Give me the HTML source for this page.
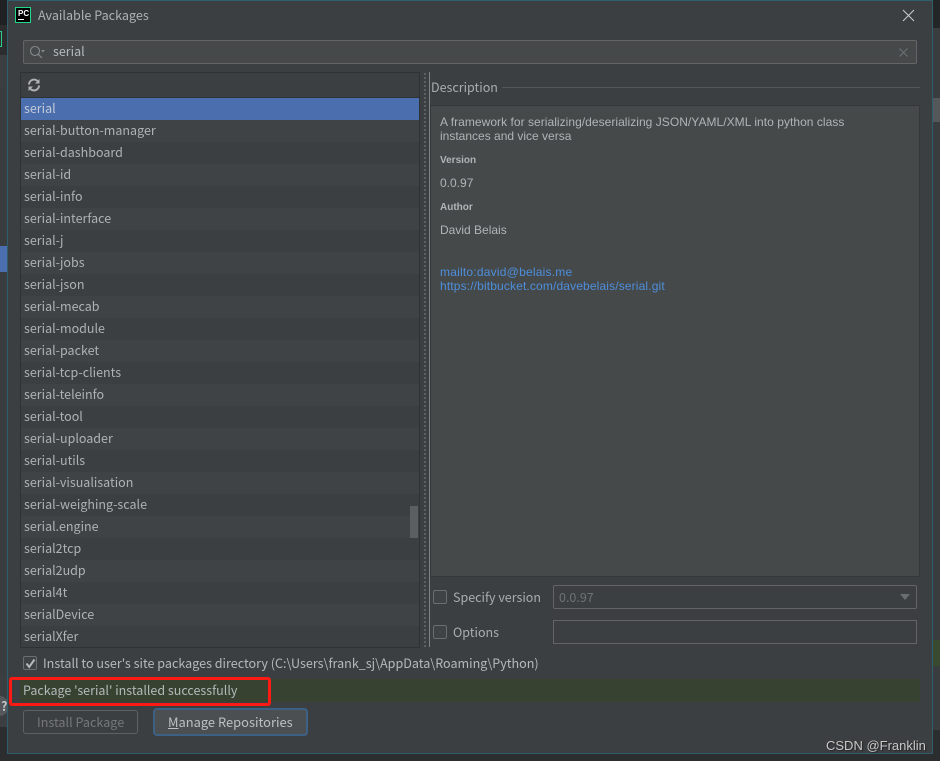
<!DOCTYPE html>
<html><head><meta charset="utf-8">
<style>
html,body{margin:0;padding:0;}
body{width:940px;height:761px;position:relative;overflow:hidden;background:#2b2d2f;font-family:"Noto Sans CJK SC","Liberation Sans",sans-serif;font-size:12.5px;color:#b5b9bb;}
div,span{position:absolute;box-sizing:border-box;}
.t{white-space:nowrap;line-height:18px;}
.row{left:0;width:398px;height:22px;line-height:20px;padding-left:3px;white-space:nowrap;color:#aeb2b4;}
.l{background:#404345;}
.a{font-family:"Liberation Sans",sans-serif;font-size:12px;white-space:nowrap;line-height:14px;color:#b0b4b6;}
.cb{width:14px;height:14px;border:1px solid #6b6e70;border-radius:2px;background:#3f4345;}
</style></head><body>
<!-- background IDE -->
<div style="left:0;top:0;width:8px;height:25px;background:#1f2122"></div>
<div style="left:0;top:25px;width:8px;height:30px;background:#2b2d2f"></div>
<div style="left:0;top:31px;width:2px;height:16px;border:1px solid #2ecf8b;border-left:0"></div>
<div style="left:0;top:55px;width:8px;height:32px;background:#3c3f41"></div>
<div style="left:0;top:87px;width:8px;height:590px;background:#3a3d3f"></div>
<div style="left:0;top:246px;width:8px;height:26px;background:#4b6eaf"></div>
<div style="left:0;top:677px;width:8px;height:50px;background:#3c3f41"></div>
<div style="left:-8px;top:696px;width:16px;height:20px;background:#55585a;border-radius:9px"></div>
<div class="t" style="left:1px;top:697px;color:#c4c7c8;font-weight:bold">?</div>
<div style="left:932px;top:0;width:8px;height:761px;background:#3a3d3f"></div>
<div style="left:932px;top:0;width:8px;height:28px;background:#232526"></div>
<div style="left:932px;top:98px;width:8px;height:24px;background:#54585a"></div>
<div style="left:932px;top:640px;width:8px;height:26px;background:#3a4a30"></div>
<div style="left:932px;top:730px;width:8px;height:31px;background:#2b2d2f"></div>

<!-- dialog -->
<div style="left:7px;top:0;width:926px;height:754px;background:#3c3f41;border:1px solid #2f5f6c;"></div>

<!-- logo -->
<div style="left:15px;top:7px;width:16px;height:16px;background:#000;border:1px solid #21d789;"></div>
<div style="left:18px;top:9px;width:13px;height:9px;color:#fff;font:bold 8px/9px 'Liberation Sans',sans-serif;white-space:nowrap">PC</div>
<div style="left:18px;top:19px;width:6px;height:1px;background:#fff"></div>
<div class="t" style="left:38px;top:6px;color:#aeb2b4;font-size:12.6px">Available Packages</div>
<svg style="position:absolute;left:902px;top:9px" width="13" height="13" viewBox="0 0 13 13"><path d="M1 1L12 12M12 1L1 12" stroke="#c4c7c8" stroke-width="1.1" fill="none"/></svg>

<!-- search -->
<div style="left:23px;top:40px;width:894px;height:24px;background:#45494a;border:1px solid #646464;border-radius:2px"></div>
<svg style="position:absolute;left:28px;top:44px" width="20" height="16" viewBox="0 0 20 16"><circle cx="7" cy="7" r="4.5" stroke="#85898b" stroke-width="1.1" fill="none"/><path d="M10.3 10.3L14 14" stroke="#85898b" stroke-width="1.1"/><path d="M13 6h4l-2 2.5z" fill="#85898b"/></svg>
<div class="t" style="left:53px;top:42px;color:#b5b9bb">serial</div>
<svg style="position:absolute;left:899px;top:48px" width="9" height="9" viewBox="0 0 9 9"><path d="M.5.5L8.5 8.5M8.5.5L.5 8.5" stroke="#6e7173" stroke-width="1" fill="none"/></svg>

<!-- list -->
<div style="left:20px;top:72px;width:400px;height:576px;border:1px solid #2f3234;background:#3c3f41;overflow:hidden">
  <svg style="position:absolute;left:6px;top:5px" width="14" height="14" viewBox="0 0 14 14"><path d="M2 6.5A5 5 0 0 1 11 3.6" stroke="#afb1b3" stroke-width="2" fill="none"/><path d="M12.5 1v4.5H8z" fill="#afb1b3"/><path d="M12 7.5A5 5 0 0 1 3 10.4" stroke="#afb1b3" stroke-width="2" fill="none"/><path d="M1.5 13V8.5H6z" fill="#afb1b3"/></svg>
  <div style="left:0;top:24px;width:398px;height:1px;background:#2f3234"></div>
  <div style="left:0;top:25px;width:398px;height:550px;background:#3c3f41;overflow:hidden">
  <div class="row" style="top:0;background:#4b6eaf;color:#c3cad6">serial</div>
  <div class="row l" style="top:22px">serial-button-manager</div>
  <div class="row" style="top:44px">serial-dashboard</div>
  <div class="row l" style="top:66px">serial-id</div>
  <div class="row" style="top:88px">serial-info</div>
  <div class="row l" style="top:110px">serial-interface</div>
  <div class="row" style="top:132px">serial-j</div>
  <div class="row l" style="top:154px">serial-jobs</div>
  <div class="row" style="top:176px">serial-json</div>
  <div class="row l" style="top:198px">serial-mecab</div>
  <div class="row" style="top:220px">serial-module</div>
  <div class="row l" style="top:242px">serial-packet</div>
  <div class="row" style="top:264px">serial-tcp-clients</div>
  <div class="row l" style="top:286px">serial-teleinfo</div>
  <div class="row" style="top:308px">serial-tool</div>
  <div class="row l" style="top:330px">serial-uploader</div>
  <div class="row" style="top:352px">serial-utils</div>
  <div class="row l" style="top:374px">serial-visualisation</div>
  <div class="row" style="top:396px">serial-weighing-scale</div>
  <div class="row l" style="top:418px">serial.engine</div>
  <div class="row" style="top:440px">serial2tcp</div>
  <div class="row l" style="top:462px">serial2udp</div>
  <div class="row" style="top:484px">serial4t</div>
  <div class="row l" style="top:506px">serialDevice</div>
  <div class="row" style="top:528px">serialXfer</div>
  <div style="left:389px;top:408px;width:8px;height:32px;background:#5c5f61"></div>
  </div>
</div>

<!-- splitter -->
<div style="left:424px;top:73px;width:2px;height:575px;background:repeating-linear-gradient(#5d6062 0 2px,#3c3f41 2px 4px)"></div>
<div style="left:429px;top:72px;width:1px;height:575px;background:#7c8287"></div>

<!-- description -->
<div class="t" style="left:431px;top:78px;color:#a9adaf">Description</div>
<div style="left:502px;top:87px;width:418px;height:1px;background:#54575a"></div>
<div style="left:430px;top:105px;width:490px;height:472px;background:#45494a;border:1px solid #353739"></div>
<div class="a" style="left:440px;top:115px;letter-spacing:.04px">A framework for serializing/deserializing JSON/YAML/XML into python class</div>
<div class="a" style="left:440px;top:129px">instances and vice versa</div>
<div class="a" style="left:440px;top:154px;font-size:10px;font-weight:bold">Version</div>
<div class="a" style="left:440px;top:176px">0.0.97</div>
<div class="a" style="left:440px;top:201px;font-size:10px;font-weight:bold">Author</div>
<div class="a" style="left:440px;top:223px">David Belais</div>
<div class="a" style="left:440px;top:265px;color:#4e8fdc;letter-spacing:.22px">mailto:david@belais.me</div>
<div class="a" style="left:440px;top:279px;color:#4e8fdc;letter-spacing:.14px">https://bitbucket.com/davebelais/serial.git</div>

<!-- options -->
<div class="cb" style="left:433px;top:590px"></div>
<div class="t" style="left:453px;top:588px;color:#a9adaf">Specify version</div>
<div style="left:553px;top:585px;width:364px;height:24px;border:1px solid #646464;border-radius:2px;background:#3c3f41"></div>
<div class="t" style="left:559px;top:588px;color:#6f7274">0.0.97</div>
<svg style="position:absolute;left:900px;top:594px" width="10" height="7"><path d="M0 0h10L5 6z" fill="#6b6e70"/></svg>
<div class="cb" style="left:433px;top:625px"></div>
<div class="t" style="left:453px;top:623px;color:#a9adaf">Options</div>
<div style="left:553px;top:620px;width:364px;height:24px;border:1px solid #646464;background:#3c3f41"></div>

<!-- install checkbox -->
<div class="cb" style="left:23px;top:656px"></div>
<svg style="position:absolute;left:24px;top:657px" width="13" height="13" viewBox="0 0 13 13"><path d="M2.5 6.5L5.2 10L10.5 2.5" stroke="#b5b9bb" stroke-width="2" fill="none"/></svg>
<div class="t" style="left:43px;top:654px;color:#b5b9bb;font-size:12.57px">Install to user's site packages directory (C:\Users\frank_sj\AppData\Roaming\Python)</div>

<!-- success -->
<div style="left:20px;top:679px;width:900px;height:23px;background:#374230"></div>
<div class="t" style="left:23px;top:681px;color:#b5b9bb">Package 'serial' installed successfully</div>
<div style="left:9px;top:677px;width:262px;height:29px;border:3px solid #fb1a14;border-radius:3px"></div>

<!-- buttons -->
<div style="left:23px;top:710px;width:115px;height:24px;border:1px solid #5e6163;border-radius:3px"></div>
<div class="t" style="left:37px;top:713px;color:#75787a;font-size:12.6px">Install Package</div>
<div style="left:153px;top:708px;width:155px;height:28px;border:2px solid #3d6185;border-radius:4px;background:#4b4f51"></div>
<div class="t" style="left:168px;top:713px;color:#bcc0c2;font-size:12.9px"><u>M</u>anage Repositories</div>

<!-- watermark -->
<div class="t" style="left:826px;top:737px;color:#c8c8c8;font-family:'Liberation Sans',sans-serif;font-size:13px;text-shadow:1px 1px 1px #222">CSDN @Franklin</div>
</body></html>
